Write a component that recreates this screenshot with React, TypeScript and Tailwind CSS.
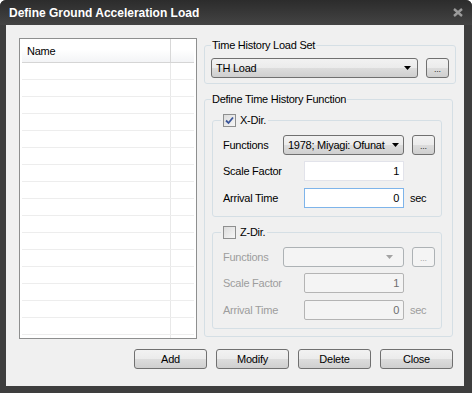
import React from 'react';

const rows = Array.from({ length: 17 });

function Triangle({ disabled = false }: { disabled?: boolean }) {
  return (
    <svg width="7" height="4" viewBox="0 0 7 4" className="shrink-0">
      <path d="M0 0h7L3.5 4z" fill={disabled ? '#a3a3a3' : '#000'} />
    </svg>
  );
}

function DotsButton({ disabled = false }: { disabled?: boolean }) {
  return (
    <div
      className={
        disabled
          ? 'ml-[8px] flex h-[20px] w-[23px] shrink-0 items-end justify-center rounded-[3px] border border-[#adb2b5] bg-[#f4f4f4] pb-[3px] text-[9px] leading-none text-[#a8a8a8]'
          : 'ml-[8px] flex h-[20px] w-[23px] shrink-0 items-end justify-center rounded-[3px] border border-[#707070] bg-[linear-gradient(#f2f2f2,#ebebeb_50%,#dddddd_50%,#cfcfcf)] pb-[3px] text-[9px] leading-none text-[#333]'
      }
    >
      ...
    </div>
  );
}

function Check({ checked, label }: { checked: boolean; label: string }) {
  return (
    <legend className="-ml-[2px] flex h-[14px] items-center gap-[4px] px-[2px]">
      <span className="flex h-[13px] w-[13px] items-center justify-center border border-[#8e8f8f] bg-[linear-gradient(135deg,#dcdcdc,#f6f6f6)]">
        {checked && (
          <svg width="9" height="9" viewBox="0 0 9 9">
            <path d="M1 4.5l2.5 2.5L8 1.5" fill="none" stroke="#3b569a" strokeWidth="1.8" />
          </svg>
        )}
      </span>
      <span className="text-black">{label}</span>
    </legend>
  );
}

function DirGroup({ dir, enabled, className = '' }: { dir: string; enabled: boolean; className?: string }) {
  const label = enabled
    ? 'w-[60px] shrink-0 whitespace-nowrap text-black'
    : 'w-[60px] shrink-0 whitespace-nowrap text-[#9d9d9d]';
  const input = enabled
    ? 'ml-[21px] flex h-[20px] w-[100px] shrink-0 items-center justify-end border bg-white pr-[4px] text-black'
    : 'ml-[21px] flex h-[20px] w-[100px] shrink-0 items-center justify-end rounded-[2px] border border-[#b4b4b4] bg-[#f4f4f4] pr-[4px] text-[#6d6d6d]';
  return (
    <fieldset className={`rounded-[3px] border border-[#d5dfe5] pt-[8px] pb-[8px] pl-[10px] ${className}`}>
      <Check checked={enabled} label={dir} />
      <div className="flex h-[20px] items-center">
        <span className={label}>Functions</span>
        {enabled ? (
          <div className="flex h-[20px] w-[121px] shrink-0 items-center gap-[5px] rounded-[3px] border border-[#707070] bg-[linear-gradient(#f2f2f2,#ebebeb_50%,#dddddd_50%,#cfcfcf)] pr-[4px] pl-[4px]">
            <span className="min-w-0 flex-1 overflow-hidden whitespace-nowrap">1978; Miyagi: Ofunat</span>
            <Triangle />
          </div>
        ) : (
          <div className="flex h-[20px] w-[121px] shrink-0 items-center justify-end rounded-[3px] border border-[#adb2b5] bg-[#f4f4f4] pr-[10px]">
            <Triangle disabled />
          </div>
        )}
        <DotsButton disabled={!enabled} />
      </div>
      <div className="mt-[6px] flex h-[20px] items-center">
        <span className={label}>Scale Factor</span>
        <div className={`${input} ${enabled ? 'border-[#e2e3ea]' : ''}`}>1</div>
      </div>
      <div className="mt-[7px] flex h-[20px] items-center">
        <span className={label}>Arrival Time</span>
        <div className={`${input} ${enabled ? 'border-[#7eb4ea]' : ''}`}>0</div>
        <span className={enabled ? 'ml-[6px] text-black' : 'ml-[6px] text-[#9d9d9d]'}>sec</span>
      </div>
    </fieldset>
  );
}

export default function App() {
  return (
    <div className="flex h-[393px] w-[472px] flex-col overflow-hidden rounded-t-[6px] bg-[#3e3e3e] font-['Liberation_Sans',Arial,sans-serif] text-[11px] leading-[14px] tracking-[-0.25px] text-black">
      {/* title bar */}
      <div className="flex h-[25px] shrink-0 items-center justify-between bg-[linear-gradient(#2c2c2c,#3a3a3a_60%,#444444)] pr-[9px] pl-[9px]">
        <span className="text-[12px] font-bold tracking-normal text-white">Define Ground Acceleration Load</span>
        <svg width="10" height="9" viewBox="0 0 10 9">
          <path d="M1 1l8 7M9 1L1 8" stroke="#9b9b9b" strokeWidth="2.4" />
        </svg>
      </div>

      <div className="ml-[6px] mr-[8px] flex h-[361px] flex-col bg-[#f0f0f0] pt-[13px] pr-[11px] pl-[13px]">
        <div className="flex h-[301px] gap-[7px]">
          {/* name list */}
          <div className="flex w-[178px] flex-col overflow-hidden border border-[#8e8f8f] bg-white px-[2px]">
            <div className="flex h-[24px] shrink-0 border-b border-[#d5d5d5] bg-[linear-gradient(#ffffff,#ffffff_45%,#f3f4f6)]">
              <div className="flex w-[149px] items-center border-r border-[#d8d8d8] pl-[5px]">Name</div>
              <div className="flex-1" />
            </div>
            {rows.map((_, i) => (
              <div key={i} className="flex h-[17px] shrink-0 border-b border-[#ededed]">
                <div className="w-[149px] border-r border-[#e8e8e8]" />
                <div className="flex-1" />
              </div>
            ))}
          </div>

          {/* right side */}
          <div className="flex w-[249px] flex-col">
            <fieldset className="rounded-[3px] border border-[#d5dfe5] px-[6px] pt-[6px] pb-[5px]">
              <legend className="h-[14px] px-[1px]">Time History Load Set</legend>
              <div className="flex items-center">
                <div className="flex h-[20px] w-[207px] items-center justify-between rounded-[3px] border border-[#707070] bg-[linear-gradient(#f2f2f2,#ebebeb_50%,#dddddd_50%,#cfcfcf)] pr-[6px] pl-[4px]">
                  <span>TH Load</span>
                  <Triangle />
                </div>
                <DotsButton />
              </div>
            </fieldset>

            <fieldset className="mt-[8px] rounded-[3px] border border-[#d5dfe5] pt-[7px] pr-[10px] pb-[7px] pl-[7px]">
              <legend className="ml-[-1px] h-[14px] px-[1px]">Define Time History Function</legend>
              <DirGroup dir="X-Dir." enabled />
              <DirGroup dir="Z-Dir." enabled={false} className="mt-[8px]" />
            </fieldset>
          </div>
        </div>

        {/* buttons */}
        <div className="mt-[10px] flex justify-end gap-[9px]">
          {['Add', 'Modify', 'Delete', 'Close'].map((b) => (
            <div
              key={b}
              className="flex h-[20px] w-[73px] items-center justify-center rounded-[3px] border border-[#707070] bg-[linear-gradient(#f2f2f2,#ebebeb_50%,#dddddd_50%,#cfcfcf)]"
            >
              {b}
            </div>
          ))}
        </div>
      </div>
      <div className="h-[7px]" />
    </div>
  );
}
